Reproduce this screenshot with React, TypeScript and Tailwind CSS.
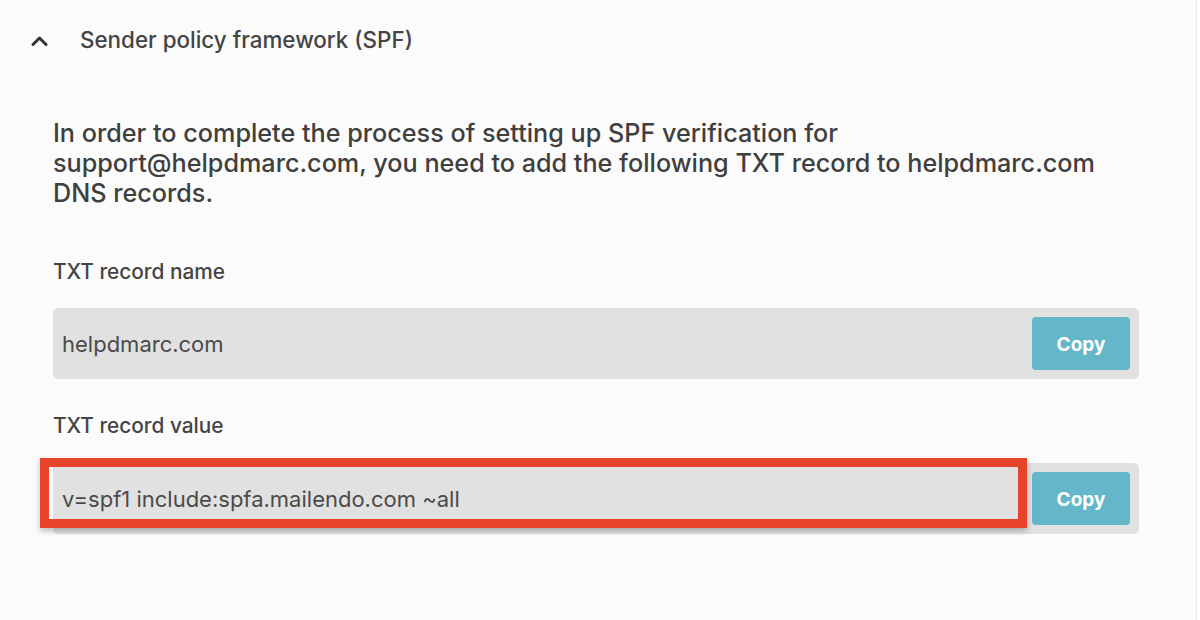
import React from 'react';

const font = { fontFamily: 'Inter, "Liberation Sans", sans-serif' };

function RecordField({ value, highlight }: { value: string; highlight?: boolean }) {
  return (
    <div className="relative">
      <div className="flex h-[71px] items-center justify-between rounded-[5px] bg-[#e1e1e1] pl-[9px] pr-[9px]">
        <span className="text-[22px] leading-[28px] text-[#4a4a4a]">{value}</span>
        <button
          type="button"
          className="h-[53px] w-[98px] rounded-[4px] bg-[#63b7c9] pt-[3px] text-[19px] font-bold text-white"
        >
          Copy
        </button>
      </div>
      {highlight && (
        <div className="pointer-events-none absolute left-[-13px] top-[-5px] h-[70px] w-[987px] border-[9px] border-[#e8432b] shadow-[0_3px_6px_rgba(0,0,0,0.25)]" />
      )}
    </div>
  );
}

export default function App() {
  return (
    <div className="flex h-[620px] w-[1200px] bg-white" style={font}>
      <div className="h-full w-[1197px] border-r border-[#e8e8e8] bg-[#fbfbfb]">
        <div className="flex items-center pl-[31px] pt-[24px]">
          <svg width="17" height="10" viewBox="0 0 17 10" fill="none" className="mt-[1px]">
            <path d="M2 8.5 L8.5 2 L15 8.5" stroke="#333" strokeWidth="3" strokeLinecap="round" strokeLinejoin="round" />
          </svg>
          <span className="ml-[32px] text-[22.4px] font-medium leading-[32px] text-[#444]">
            Sender policy framework (SPF)
          </span>
        </div>

        <div className="pl-[53px] pr-[57px]">
          <p className="mt-[62px] text-[25.2px] font-medium leading-[30px] text-[#3f3f3f]">
            In order to complete the process of setting up SPF verification for
            <br />
            support@helpdmarc.com, you need to add the following TXT record to helpdmarc.com
            <br />
            DNS records.
          </p>

          <div className="mt-[50px] text-[20.8px] font-medium leading-[28px] text-[#444]">TXT record name</div>
          <div className="mt-[22px]">
            <RecordField value="helpdmarc.com" />
          </div>

          <div className="mt-[33px] text-[20.8px] font-medium leading-[28px] text-[#444]">TXT record value</div>
          <div className="mt-[23px]">
            <RecordField value="v=spf1 include:spfa.mailendo.com ~all" highlight />
          </div>
        </div>
      </div>
    </div>
  );
}
